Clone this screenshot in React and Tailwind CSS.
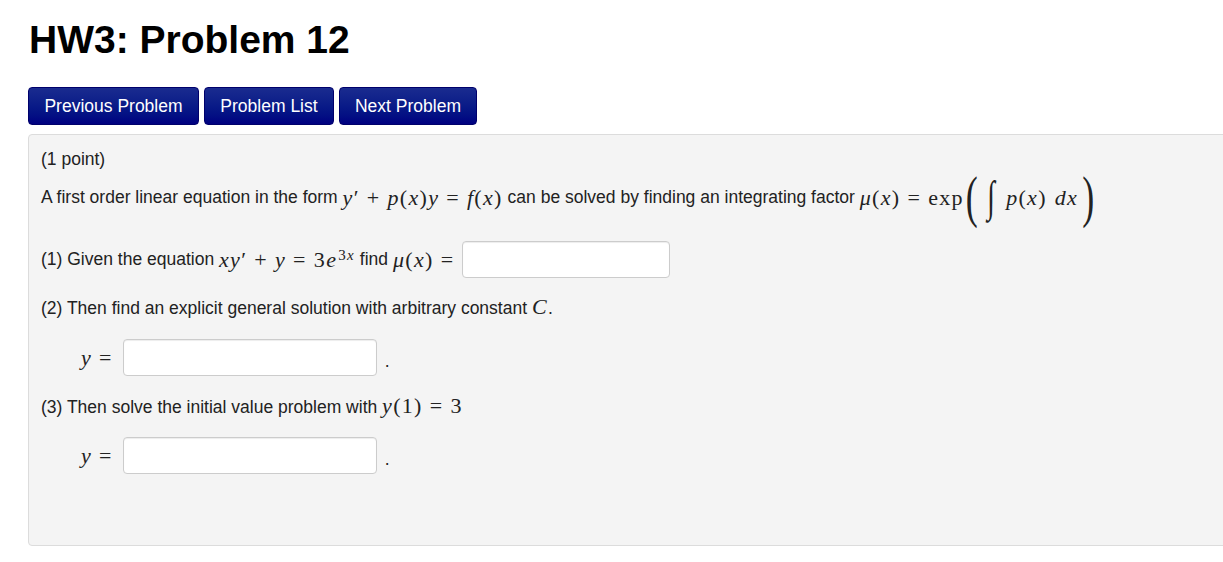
import React from 'react'

const sans = { fontFamily: '"Liberation Sans", Arial, sans-serif' }

function M({ children, className = '' }) {
  return (
    <span className={`font-['Liberation_Serif',serif] text-[22px] tracking-[1.3px] ${className}`}>{children}</span>
  )
}

function I({ children }) {
  return <span className="italic">{children}</span>
}

function Op({ children }) {
  return <span className="mx-[7px]">{children}</span>
}

function Answer({ w = 'w-[254px]' }) {
  return (
    <input
      type="text"
      className={`${w} h-[37px] rounded-[4px] border border-[#cccccc] bg-white px-2 align-middle shadow-[inset_0_1px_1px_rgba(0,0,0,0.075)] outline-none`}
    />
  )
}

function NavButton({ children, w }) {
  return (
    <button
      className={`${w} h-[38px] rounded-[4px] border border-[#00006b] bg-gradient-to-b from-[#1a2b8f] to-[#000080] text-[17.5px] text-white`}
    >
      {children}
    </button>
  )
}

export default function App() {
  return (
    <div className="min-h-[562px] bg-white text-[#222]" style={sans}>
      <div className="pl-[28px] pt-[15px]">
        <h1 className="ml-[1px] text-[39px] font-bold leading-[50px] text-black">HW3: Problem 12</h1>
        <div className="mt-[22px] flex gap-[5px]">
          <NavButton w="w-[171px]">Previous Problem</NavButton>
          <NavButton w="w-[130px]">Problem List</NavButton>
          <NavButton w="w-[138px]">Next Problem</NavButton>
        </div>

        <div className="mt-[9px] h-[412px] w-[1220px] rounded-l-[4px] border border-[#dcdcdc] bg-[#f4f4f4] pl-[12px] pt-[14px] text-[17.5px]">
          <p className="leading-[20px]">(1 point)</p>

          <p className="mt-[6px] flex h-[44px] items-center whitespace-nowrap">
            <span>A first order linear equation in the form&nbsp;</span>
            <M>
              <I>y</I>′<Op>+</Op><I>p</I>(<I>x</I>)<I>y</I><Op>=</Op><I>f</I>(<I>x</I>)
            </M>
            <span>&nbsp;can be solved by finding an integrating factor&nbsp;</span>
            <M className="flex items-center">
              <I>μ</I>(<I>x</I>)<Op>=</Op>exp
              <span className="ml-[2px] inline-block scale-y-[1.6] text-[36px] font-light leading-none">(</span>
              <span className="ml-[8px] mr-[10px] inline-block scale-y-[1.55] italic text-[28px] leading-none">∫</span>
              <I>p</I>(<I>x</I>)<span className="w-[8px]" /><I>dx</I>
              <span className="ml-[4px] inline-block scale-y-[1.6] text-[36px] font-light leading-none">)</span>
            </M>
          </p>

          <p className="mt-[22px] flex items-center whitespace-nowrap">
            <span>(1) Given the equation&nbsp;</span>
            <M>
              <I>xy</I>′<Op>+</Op><I>y</I><Op>=</Op>3<I>e</I>
              <sup className="ml-[1px] text-[15px]">
                3<I>x</I>
              </sup>
            </M>
            <span>&nbsp;find&nbsp;</span>
            <M>
              <I>μ</I>(<I>x</I>)<Op>=</Op>
            </M>
            <span className="ml-[1px]">
              <Answer w="w-[208px]" />
            </span>
          </p>

          <p className="mt-[17px] leading-[24px]">
            (2) Then find an explicit general solution with arbitrary constant <M><I>C</I></M>.
          </p>

          <div className="mt-[19px] flex items-center pl-[40px]">
            <M>
              <I>y</I><Op>=</Op>
            </M>
            <span className="ml-[3px]">
              <Answer />
            </span>
            <span className="ml-[8px] mt-[8px]">.</span>
          </div>

          <p className="mt-[18px] leading-[24px]">
            (3) Then solve the initial value problem with <M><I>y</I>(1)<Op>=</Op>3</M>
          </p>

          <div className="mt-[18px] flex items-center pl-[40px]">
            <M>
              <I>y</I><Op>=</Op>
            </M>
            <span className="ml-[3px]">
              <Answer />
            </span>
            <span className="ml-[8px] mt-[8px]">.</span>
          </div>
        </div>
      </div>
    </div>
  )
}
